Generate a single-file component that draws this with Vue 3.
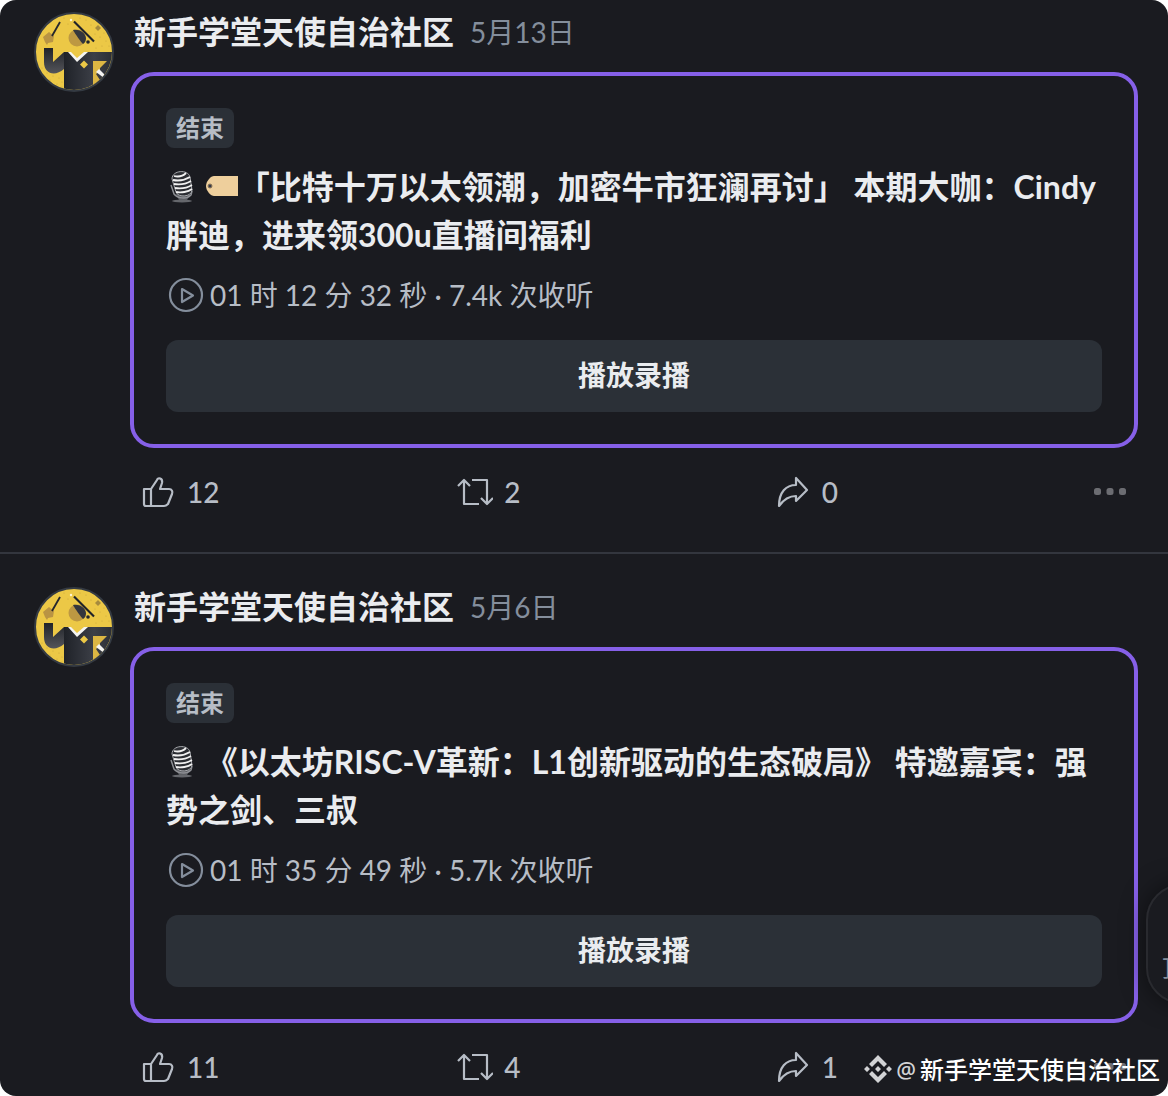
<template>
  <main class="feed">
    <article v-for="post in posts" :key="post.id" class="post">
      <a href="#" class="avatar" :aria-label="post.author">
        <svg viewBox="0 0 80 80" width="80" height="80">
          <defs>
            <clipPath :id="`face-${post.id}`">
              <circle cx="40" cy="40" r="38" />
            </clipPath>
            <linearGradient :id="`coat-${post.id}`" x1="0" y1="0" x2="1" y2="0">
              <stop offset="0" stop-color="#1f2228" />
              <stop offset="0.6" stop-color="#3c3f47" />
              <stop offset="1" stop-color="#2a2d34" />
            </linearGradient>
            <linearGradient :id="`arm-${post.id}`" x1="0" y1="0" x2="0" y2="1">
              <stop offset="0" stop-color="#202329" />
              <stop offset="1" stop-color="#54555a" />
            </linearGradient>
          </defs>
          <circle cx="40" cy="40" r="39" fill="#ecc846" stroke="#343a42" stroke-width="2" />
          <g :clip-path="`url(#face-${post.id})`">
            <g fill="#cba83c">
              <circle v-for="(dot, i) in dots" :key="i" :cx="dot[0]" :cy="dot[1]" r="0.6" />
            </g>
            <!-- brush and stick -->
            <path d="M9 25l6-5 5 4-1 6-5 1-1 2-2-3z" fill="#b99443" />
            <path d="M18 24l8-14" stroke="#25272d" stroke-width="1.800" />
            <circle cx="37" cy="8" r="1.200" fill="#fff6d8" />
            <path d="M64 13l3 3-3 3-3-3z" fill="#a58a3d" />
            <!-- head with cap -->
            <circle cx="43" cy="26" r="8.500" fill="#bd9842" />
            <path d="M39 18c6-1 12 2 13 8 0 3-1 5-3 6-3-3-7-9-10-14z" fill="#34363d" />
            <path d="M40 9.500l20 20" stroke="#202329" stroke-width="2.200" />
            <circle cx="54" cy="30" r="1.800" fill="#25272d" />
            <!-- coat -->
            <path d="M10 36h9v14l11-10v17c-9 8-20 5-20-7z" :fill="`url(#arm-${post.id})`" />
            <path d="M30 40h5l8 8 9-8h28v40H30z" :fill="`url(#coat-${post.id})`" />
            <path d="M34 40h3l6 6 7-6h4L43 50z" fill="#f4f4f2" />
            <path d="M50 48.500l4 4-4 4-4-4z" fill="#ecc846" />
            <path d="M59 49h14l-7 7v3l-4 3 4 6-7 5z" fill="#dcb643" />
            <path d="M62 60l3-3 5 5v4z" fill="#f4f4f2" />
          </g>
        </svg>
      </a>

      <div class="body">
        <header class="post-head">
          <a href="#" class="author">{{ post.author }}</a>
          <time class="date">{{ post.date }}</time>
        </header>

        <section class="card">
          <span class="badge">结束</span>
          <h2 class="title">
            <svg class="emoji" viewBox="0 0 32 32" width="32" height="32" role="img" aria-label="麦克风">
              <ellipse cx="16" cy="30" rx="10" ry="1.500" fill="#65676c" />
              <path d="M10 23l3 6h8l3-5z" fill="#5d5f64" />
              <path d="M5 14l3 9c3 4 12 6 17 1l1-4" fill="none" stroke="#8e9095" stroke-width="1.500" />
              <path d="M6 8C6-1 22-2 24 6l2 13c0 7-14 8-16 2z" fill="#2b2d32" stroke="#a7a9ad" />
              <path
                d="M8 5c4 1 9 0 12-3M7 9c5 1 12 0 17-3M8 13c6 1 12 0 17-3M9 17c6 1 12 0 17-3M10 21c5 1 12 0 16-3"
                fill="none"
                stroke="#f0f0f0"
                stroke-width="1.800"
              />
            </svg>
            {{ ' ' }}<svg
              v-if="post.tagged"
              class="emoji"
              viewBox="0 0 32 32"
              width="32"
              height="32"
              role="img"
              aria-label="标签"
            >
              <path d="M8 5h24v20H8c-3 0-8-5-8-10S5 5 8 5z" fill="#eecf9c" />
              <circle cx="4" cy="15" r="2" fill="#343a4a" stroke="#8d7655" />
            </svg>{{ post.title }}
          </h2>
          <p class="meta">
            <svg viewBox="0 0 40 40" width="40" height="40" aria-hidden="true">
              <g fill="none" stroke="#848e9c" stroke-width="2.200">
                <circle cx="20" cy="20" r="16" />
                <path d="M16 14l11 6.500-11 6.500z" stroke-linejoin="round" />
              </g>
            </svg>
            <span>{{ post.duration }} · {{ post.listens }} 次收听</span>
          </p>
          <button type="button" class="play">播放录播</button>
        </section>

        <footer class="actions">
          <button type="button" class="action" aria-label="点赞">
            <svg viewBox="0 0 36 36" width="36" height="36">
              <path
                d="M4 15h7l6-9c1-3 6-2 5 3l-2 6h9c3 0 4 3 3 5l-4 10c-1 1-2 2-4 2H6c-1 0-2-1-2-2zM11 15v17"
              />
            </svg>
            <span>{{ post.likes }}</span>
          </button>
          <button type="button" class="action" aria-label="转发">
            <svg viewBox="0 0 36 36" width="36" height="36">
              <path d="M1 12l6-6 6 6M7 6v24h15M15 6h15v24M24 24l6 6 6-6" />
            </svg>
            <span>{{ post.reposts }}</span>
          </button>
          <button type="button" class="action" aria-label="分享">
            <svg viewBox="0 0 36 36" width="36" height="36">
              <path d="M21 4v7C11 11 4 18 4 32c5-7 10-10 17-10v5l11-11z" />
            </svg>
            <span>{{ post.shares }}</span>
          </button>
          <button type="button" class="action more" aria-label="更多">
            <svg viewBox="0 0 36 36" width="36" height="36">
              <rect x="2" y="14" width="7" height="7" rx="2.500" />
              <rect x="14.500" y="14" width="7" height="7" rx="2.500" />
              <rect x="27" y="14" width="7" height="7" rx="2.500" />
            </svg>
          </button>
        </footer>
      </div>
    </article>

    <button type="button" class="float-tab">顶部</button>

    <div class="watermark">
      <svg viewBox="0 0 28 28" width="28" height="28" aria-hidden="true">
        <path
          d="M14 0l9 9-3 3-6-6-6 6-3-3zM3 11l3 3-3 3-3-3zM14 11l3 3-3 3-3-3zM25 11l3 3-3 3-3-3zM5 19l3-3 6 6 6-6 3 3-9 9z"
        />
      </svg>
      <span class="at">@</span>
      <span>新手学堂天使自治社区</span>
    </div>
  </main>
</template>

<script setup>
const posts = [
  {
    id: 1,
    author: '新手学堂天使自治社区',
    date: '5月13日',
    tagged: true,
    title: '「比特十万以太领潮，加密牛市狂澜再讨」 本期大咖：Cindy 胖迪，进来领300u直播间福利',
    duration: '01 时 12 分 32 秒',
    listens: '7.4k',
    likes: 12,
    reposts: 2,
    shares: 0
  },
  {
    id: 2,
    author: '新手学堂天使自治社区',
    date: '5月6日',
    tagged: false,
    title: '《以太坊RISC-V革新：L1创新驱动的生态破局》 特邀嘉宾：强势之剑、三叔',
    duration: '01 时 35 分 49 秒',
    listens: '5.7k',
    likes: 11,
    reposts: 4,
    shares: 1
  }
]

// Speckles on the yellow disc of the avatar
const dots = [
  [30, 6], [34, 12], [46, 6], [52, 8], [57, 13], [61, 22], [66, 25], [70, 21],
  [72, 29], [75, 34], [68, 34], [62, 36], [8, 56], [13, 61], [19, 64], [25, 66],
  [16, 68], [23, 72], [28, 70], [28, 75]
]
</script>

<style>
body {
  margin: 0;
  background: #fff;
}
</style>

<style scoped>
.feed {
  position: relative;
  overflow: hidden;
  border-radius: 16px;
  background: #1a1b20;
  color: #eaecef;
  font-family: Lato, "Noto Sans CJK SC", sans-serif;
}

.post {
  display: flex;
  gap: 16px;
  padding: 33px 30px 36px 34px;
}

.post:first-child {
  padding-top: 12px;
  border-bottom: 2px solid #33363e;
}

/* the last row is cut by the bottom of the view */
.post:nth-child(2) {
  padding-bottom: 5px;
}

.avatar {
  flex: none;
  width: 80px;
  height: 80px;
}

.avatar svg {
  display: block;
}

.body {
  flex: 1;
  min-width: 0;
}

.post-head {
  display: flex;
  align-items: center;
  gap: 16px;
  height: 40px;
  margin-bottom: 20px;
  padding-left: 4px;
}

.author {
  color: #eaecef;
  font-size: 32px;
  font-weight: 700;
  line-height: 40px;
  text-decoration: none;
}

.date {
  color: #848e9c;
  font-size: 28px;
  line-height: 40px;
}

.card {
  padding: 32px;
  border: 4px solid #8660e8;
  border-radius: 24px;
}

.badge {
  display: block;
  width: fit-content;
  padding: 0 10px;
  border-radius: 8px;
  background: #2b3037;
  color: #b7bdc6;
  font-size: 24px;
  font-weight: 700;
  line-height: 40px;
}

.title {
  margin: 15px 0 12px;
  font-size: 32px;
  font-weight: 700;
  line-height: 48px;
}

.emoji {
  height: 32px;
  vertical-align: -4px;
}

.meta {
  display: flex;
  align-items: center;
  gap: 4px;
  height: 48px;
  margin: 0 0 21px;
  color: #b7bdc6;
  font-size: 28px;
  line-height: 48px;
}

.play {
  display: block;
  width: 100%;
  height: 72px;
  padding: 0 0 4px;
  border: 0;
  border-radius: 12px;
  background: #2b3037;
  color: #eaecef;
  font: inherit;
  font-size: 28px;
  font-weight: 700;
}

.actions {
  display: grid;
  grid-template-columns: 1fr 1fr 1fr auto;
  margin-top: 20px;
  padding: 0 10px;
}

.action {
  display: flex;
  align-items: center;
  gap: 11px;
  height: 48px;
  padding: 0;
  border: 0;
  background: none;
  color: #b7bdc6;
  font: inherit;
  font-size: 28px;
  font-weight: 500;
}

.action svg {
  fill: none;
  stroke: currentColor;
  stroke-width: 2.200;
  stroke-linejoin: round;
}

.more svg {
  fill: #6c6d72;
  stroke: none;
}

.float-tab {
  position: absolute;
  right: -52px;
  bottom: 92px;
  width: 74px;
  height: 120px;
  padding: 44px 0 0 14px;
  border: 2px solid #292a2f;
  border-radius: 36px;
  background: #1a1b20;
  box-shadow: 0 0 24px rgba(0, 0, 0, 0.5);
  color: #848e9c;
  font: inherit;
  font-size: 24px;
  text-align: left;
  white-space: nowrap;
}

.watermark {
  position: absolute;
  right: 8px;
  bottom: 9px;
  display: flex;
  align-items: center;
  gap: 4px;
  color: #fff;
  font-family: "Noto Sans CJK SC", sans-serif;
  font-size: 24px;
  font-weight: 500;
  line-height: 36px;
}

.watermark svg,
.at {
  color: #d2d3d5;
  fill: currentColor;
}

.at {
  font-family: "Noto Sans", sans-serif;
  font-size: 22px;
}
</style>
